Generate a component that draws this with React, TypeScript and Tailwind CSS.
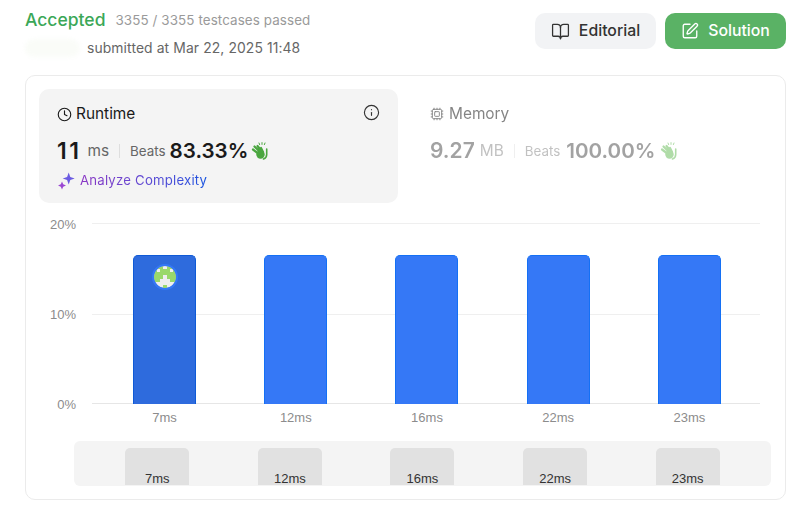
import { BookOpen, Clock, Cpu, Info, SquarePen } from "lucide-react";

const bars = ["7ms", "12ms", "16ms", "22ms", "23ms"];

// pixel avatar, 7x7 cells, 1 = green
const avatarCells = [
  [0, 1, 1, 0, 1, 1, 0],
  [1, 0, 1, 1, 1, 0, 1],
  [1, 1, 1, 1, 1, 1, 1],
  [1, 1, 1, 0, 1, 1, 1],
  [1, 1, 0, 0, 0, 1, 1],
  [0, 0, 0, 0, 0, 0, 0],
  [0, 0, 0, 1, 0, 0, 0],
];

function Avatar() {
  return (
    <svg viewBox="0 0 7 7" shapeRendering="crispEdges" className="w-[22px] h-[22px] rounded-full bg-[#eeeeee] outline-[2px] outline-[#3478f6]">
      {avatarCells.map((row, y) =>
        row.map((c, x) => (c ? <rect key={x + "-" + y} x={x} y={y} width="1" height="1" fill="#9ad86a" /> : null))
      )}
    </svg>
  );
}

function Sparkle() {
  return (
    <svg viewBox="0 0 18 18" className="w-[18px] h-[18px]">
      <path d="M11.7 0.5 L13.3 4.9 L17.7 6.5 L13.3 8.1 L11.7 12.5 L10.1 8.1 L5.7 6.5 L10.1 4.9 Z" fill="#6b5be2" />
      <path d="M5 9.5 L6.2 12.3 L9 13.5 L6.2 14.7 L5 17.5 L3.8 14.7 L1 13.5 L3.8 12.3 Z" fill="#9a47d2" />
    </svg>
  );
}

function Clap({ color }: { color: string }) {
  return (
    <svg viewBox="0 0 18 18" fill="none" stroke={color} strokeLinecap="round" className="w-[18px] h-[18px]">
      <circle cx="9.5" cy="12.5" r="4.2" fill={color} stroke="none" />
      <path d="M8 12 L2 7.5 M9 10 L3.5 4.5 M11 9.5 L6.5 4 M12 10 L10 6" strokeWidth="2.2" />
      <path d="M15.7 7 V12.5 Q15.7 16 12.5 17" strokeWidth="1.6" />
      <path d="M8 1 L8.6 2.6 M11 0.6 V2.4 M14 1 L13.4 2.6" strokeWidth="1" />
    </svg>
  );
}

export default function App() {
  return (
    <div className="w-[800px] h-[511px] bg-white overflow-hidden pl-[25px] font-['Inter',sans-serif]">
      {/* Header */}
      <div className="flex justify-between w-[761px] h-[75px]">
        <div className="pt-[9px]">
          <div className="flex items-center h-[22px]">
            <span className="text-[17.5px] font-medium text-[#3ba757]">Accepted</span>
            <span className="ml-[10px] text-[13.4px] text-[#9a9a9a] tracking-[0.1px]">3355 / 3355 testcases passed</span>
          </div>
          <div className="flex items-center mt-[6px] h-[22px]">
            <div className="w-[55px] h-[18px] mr-[7px] rounded-full bg-[#fafcf8] blur-[2px]" />
            <span className="text-[13.9px] text-[#666666] tracking-[0.1px]">submitted at Mar 22, 2025 11:48</span>
          </div>
        </div>
        <div className="flex gap-[9px] pt-[13px]">
          <div className="flex items-center justify-center gap-[9px] w-[121px] h-[36px] rounded-[10px] bg-[#f2f3f5] text-[15.8px] font-medium text-[#333333]">
            <BookOpen size={19} strokeWidth={1.6} />
            Editorial
          </div>
          <div className="flex items-center justify-center gap-[9px] w-[121px] h-[36px] rounded-[10px] bg-[#5ab265] text-[15.8px] font-medium text-white">
            <SquarePen size={18} strokeWidth={1.8} />
            Solution
          </div>
        </div>
      </div>

      {/* Card */}
      <div className="w-[761px] h-[425px] border border-[#ebebeb] rounded-[10px] pl-[13px] pt-[13px]">
        <div className="flex">
          <div className="relative w-[359px] h-[114px] rounded-[10px] bg-[#f4f4f4] pl-[18px] pt-[14px]">
            <div className="flex items-center gap-[4px] h-[22px] text-[15.4px] text-[#1a1a1a]">
              <Clock size={15} strokeWidth={1.8} />
              Runtime
            </div>
            <Info size={17} strokeWidth={1.6} className="absolute top-[15px] left-[324px] text-[#333333]" />
            <div className="flex items-center mt-[13px] h-[26px]">
              <span className="text-[23px] font-semibold text-[#1a1a1a] tracking-[2.5px]">11</span>
              <span className="ml-[6px] text-[15.4px] text-[#666666]">ms</span>
              <span className="mx-[10px] w-px h-[14px] bg-[#dedede]" />
              <span className="text-[13.4px] text-[#666666]">Beats</span>
              <span className="ml-[4px] text-[20.6px] font-semibold text-[#1a1a1a]">83.33%</span>
              <span className="ml-[3px]"><Clap color="#4aa63f" /></span>
            </div>
            <div className="flex items-center gap-[5px] mt-[7px] h-[20px]">
              <Sparkle />
              <span className="text-[13.2px] tracking-[0.2px] bg-gradient-to-r from-[#8a35c4] to-[#0f52e0] bg-clip-text text-transparent">Analyze Complexity</span>
            </div>
          </div>

          <div className="ml-[32px] pt-[14px] opacity-60">
            <div className="flex items-center gap-[5px] h-[22px] text-[15.4px] text-[#333333]">
              <Cpu size={14} strokeWidth={1.6} />
              Memory
            </div>
            <div className="flex items-center mt-[13px] h-[26px]">
              <span className="text-[21px] font-semibold text-[#666666]">9.27</span>
              <span className="ml-[5px] text-[15.4px] text-[#999999]">MB</span>
              <span className="mx-[10px] w-px h-[14px] bg-[#e6e6e6]" />
              <span className="text-[13.4px] text-[#999999]">Beats</span>
              <span className="ml-[6px] text-[20.6px] font-semibold text-[#666666]">100.00%</span>
              <span className="ml-[5px]"><Clap color="#7cc56f" /></span>
            </div>
          </div>
        </div>

        {/* Chart */}
        <div className="flex mt-[20px] font-['Liberation_Sans',sans-serif]">
          <div className="flex flex-col justify-between items-end w-[37px] h-[196px] -mt-[6px] mr-[16px] text-[13px] leading-[16px] text-[#8c8c8c]">
            <span>20%</span>
            <span>10%</span>
            <span>0%</span>
          </div>
          <div className="w-[668px]">
            <div className="relative h-[181px] pl-[7px] pr-[5px] grid grid-cols-5">
              <div className="absolute left-0 right-0 top-0 h-px bg-[#efefef]" />
              <div className="absolute left-0 right-0 top-[91px] h-px bg-[#efefef]" />
              <div className="absolute left-0 right-0 bottom-0 h-px bg-[#e6e6e6]" />
              {bars.map((b, i) => (
                <div key={b} className="relative flex justify-center items-end">
                  <div
                    className={
                      i === 0
                        ? "flex justify-center w-[63px] h-[149px] rounded-t-[5px] border border-b-0 border-[#0f5ad6] bg-[#2e6bdd] pt-[10px]"
                        : "w-[63px] h-[149px] rounded-t-[5px] border border-b-0 border-[#1470f5] bg-[#3578f6]"
                    }
                  >
                    {i === 0 && <div className="w-[22px] h-[22px]"><Avatar /></div>}
                  </div>
                </div>
              ))}
            </div>
            <div className="grid grid-cols-5 pl-[7px] pr-[5px] mt-[6px] text-[13px] leading-[16px] text-[#8c8c8c] text-center">
              {bars.map((b) => (
                <span key={b}>{b}</span>
              ))}
            </div>
          </div>
        </div>

        {/* Range selector */}
        <div className="grid grid-cols-5 ml-[35px] mt-[15px] w-[697px] h-[45px] overflow-hidden rounded-[6px] bg-[#f4f4f4] pl-[17px] pr-[17px] pt-[7px] font-['Liberation_Sans',sans-serif]">
          {bars.map((b) => (
            <div key={b} className="flex justify-center">
              <div className="flex items-end justify-center w-[64px] h-[37px] rounded-t-[5px] bg-[#e1e1e1] text-[13px] leading-[12px] text-[#333333]">
                {b}
              </div>
            </div>
          ))}
        </div>
      </div>
    </div>
  );
}
